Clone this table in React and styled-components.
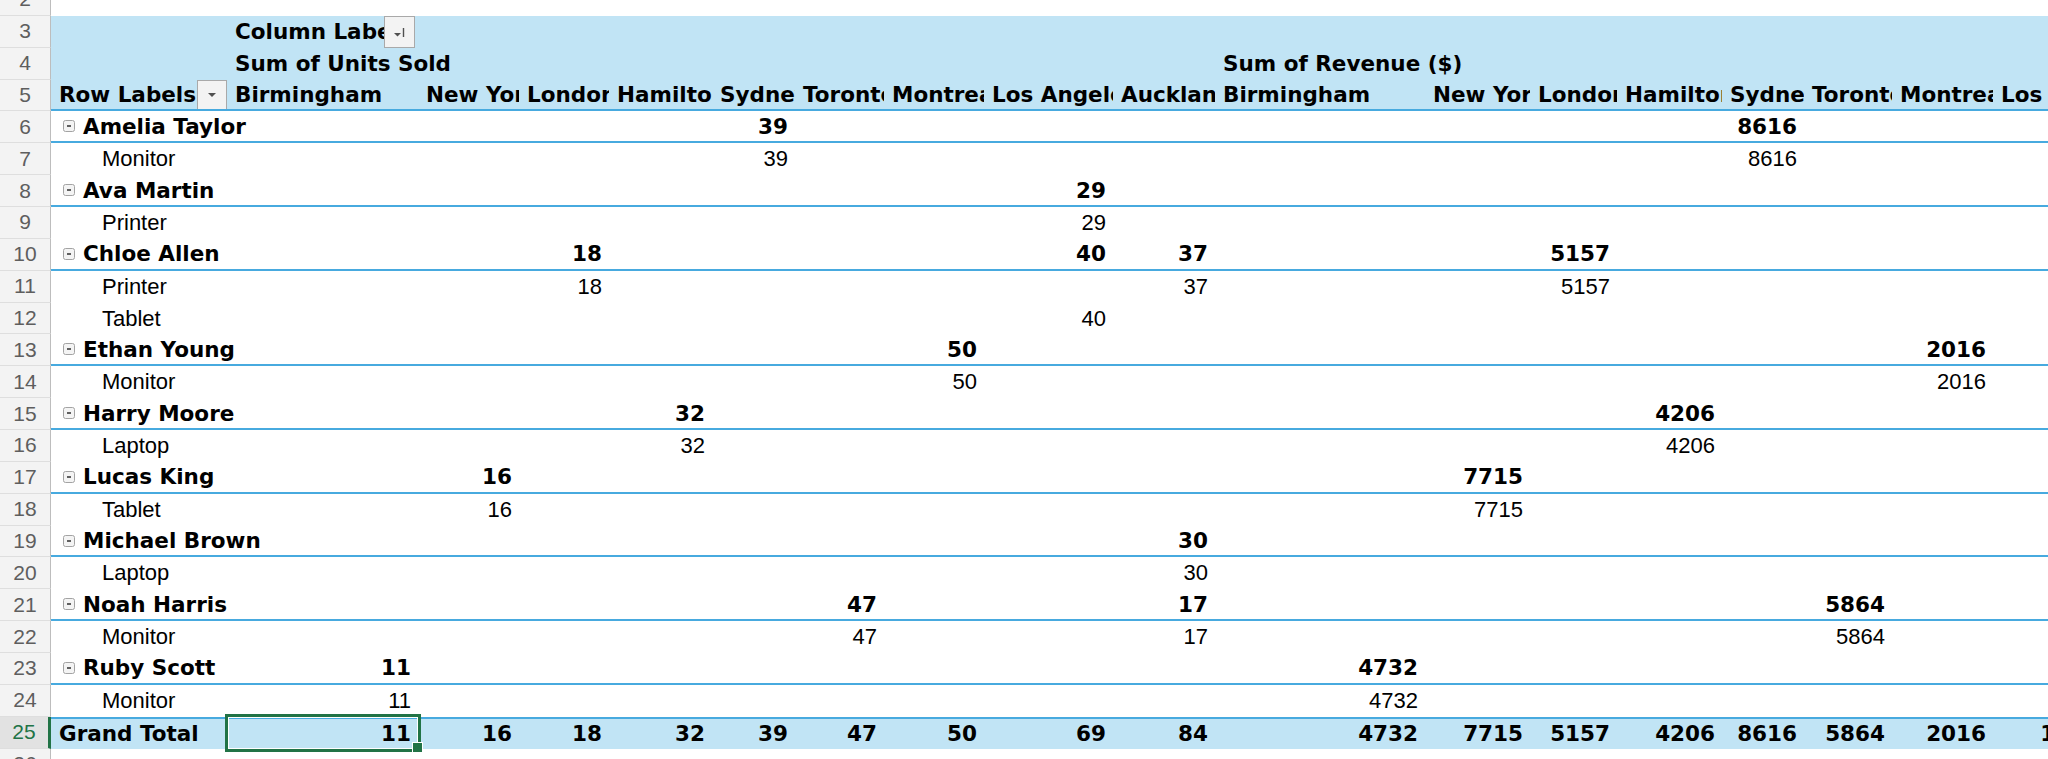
import React from 'react';
import styled, { createGlobalStyle } from 'styled-components';

// высота строки листа и ширины столбцов A..R (столбец номеров строк отдельно)
const ROW_H = 31.87;
const COL_WIDTHS = [176, 191, 101, 90, 103, 83, 89, 100, 129, 102, 210, 105, 87, 105, 82, 88, 101, 129];

const BOLD_FONT = "'DejaVu Sans', 'Liberation Sans', Arial, sans-serif";
const PLAIN_FONT = "'Liberation Sans', Arial, sans-serif";

const CITIES = ['Birmingham', 'New York', 'London', 'Hamilton', 'Sydney', 'Toronto', 'Montreal', 'Los Angeles', 'Auckland'];
const REV_CITIES = CITIES.slice(0, 8);

const people = [
  { name: 'Amelia Taylor', items: [{ name: 'Monitor', units: { Sydney: 39 }, revenue: { Sydney: 8616 } }] },
  { name: 'Ava Martin', items: [{ name: 'Printer', units: { 'Los Angeles': 29 }, revenue: { 'Los Angeles': 5423 } }] },
  {
    name: 'Chloe Allen',
    items: [
      { name: 'Printer', units: { London: 18, Auckland: 37 }, revenue: { London: 5157, Auckland: 9135 } },
      { name: 'Tablet', units: { 'Los Angeles': 40 }, revenue: { 'Los Angeles': 9880 } },
    ],
  },
  { name: 'Ethan Young', items: [{ name: 'Monitor', units: { Montreal: 50 }, revenue: { Montreal: 2016 } }] },
  { name: 'Harry Moore', items: [{ name: 'Laptop', units: { Hamilton: 32 }, revenue: { Hamilton: 4206 } }] },
  { name: 'Lucas King', items: [{ name: 'Tablet', units: { 'New York': 16 }, revenue: { 'New York': 7715 } }] },
  { name: 'Michael Brown', items: [{ name: 'Laptop', units: { Auckland: 30 }, revenue: { Auckland: 6000 } }] },
  {
    name: 'Noah Harris',
    items: [{ name: 'Monitor', units: { Toronto: 47, Auckland: 17 }, revenue: { Toronto: 5864, Auckland: 3400 } }],
  },
  { name: 'Ruby Scott', items: [{ name: 'Monitor', units: { Birmingham: 11 }, revenue: { Birmingham: 4732 } }] },
];

const addInto = (acc, obj) => {
  Object.entries(obj).forEach(([k, v]) => { acc[k] = (acc[k] || 0) + v; });
  return acc;
};

const toValues = ({ units, revenue }) => [
  ...CITIES.map(c => units[c] ?? null),
  ...REV_CITIES.map(c => revenue[c] ?? null),
];

const sumOf = list => ({
  units: list.reduce((acc, x) => addInto(acc, x.units), {}),
  revenue: list.reduce((acc, x) => addInto(acc, x.revenue), {}),
});

const GlobalStyle = createGlobalStyle`
  html, body {
    margin: 0;
    padding: 0;
    background: #fff;
    overflow: hidden;
  }
  body {
    font-family: ${PLAIN_FONT};
  }
`;

const Viewport = styled.div`
  width: 2048px;
  height: 759px;
  overflow: hidden;
  background: #fff;
`;

// лист прокручен так, что строка 2 видна наполовину
const Sheet = styled.div`
  margin-top: -16px;
  display: flex;
  flex-direction: column;
`;

const Row = styled.div`
  display: flex;
  height: ${ROW_H}px;
  flex: 0 0 ${ROW_H}px;
`;

const RowNum = styled.div`
  flex: 0 0 51px;
  box-sizing: border-box;
  display: flex;
  align-items: center;
  justify-content: center;
  background: ${p => (p.$active ? '#e2e2e2' : '#f3f3f3')};
  color: ${p => (p.$active ? '#217346' : '#5e5e5e')};
  border-right: ${p => (p.$active ? '3px solid #217346' : '1px solid #bdbdbd')};
  border-bottom: 1px solid #dedede;
  font-family: ${PLAIN_FONT};
  font-size: 21px;
`;

const Band = styled.div`
  flex: 0 0 auto;
  display: grid;
  grid-template-columns: ${COL_WIDTHS.map(w => `${w}px`).join(' ')};
  box-sizing: border-box;
  height: 100%;
  background: ${p => (p.$fill ? '#c1e4f5' : '#fff')};
  border-top: ${p => (p.$lineAbove ? '2px solid #47aadf' : 'none')};
  border-bottom: ${p => (p.$lineBelow ? '2px solid #47aadf' : 'none')};
`;

const Cell = styled.div`
  position: relative;
  min-width: 0;
  display: flex;
  align-items: center;
  justify-content: ${p => (p.$right ? 'flex-end' : 'flex-start')};
  padding: 0 ${p => p.$padRight ?? 7}px 0 ${p => p.$indent ?? 8}px;
  overflow: ${p => (p.$spill ? 'visible' : 'hidden')};
  white-space: nowrap;
  font-family: ${p => (p.$bold ? BOLD_FONT : PLAIN_FONT)};
  font-weight: ${p => (p.$bold ? 700 : 400)};
  font-size: ${p => (p.$bold ? 21.5 : 22)}px;
  color: #000;
`;

const Label = styled.span`
  flex: 1 1 auto;
  min-width: 0;
  overflow: hidden;
`;

const FilterButton = styled.span`
  flex: 0 0 ${p => p.$w}px;
  height: ${p => p.$h}px;
  align-self: flex-start;
  box-sizing: border-box;
  margin-right: ${p => p.$gap}px;
  border: 1px solid #a9a9a9;
  background: #f3f3f3;
  display: flex;
  align-items: center;
  justify-content: center;
`;

const ExpandIcon = styled.svg`
  flex: 0 0 12px;
  margin-right: 8px;
`;

const Selection = styled.span`
  position: absolute;
  top: -5px;
  bottom: -3px;
  left: -2px;
  right: -3px;
  border: 3px solid #217346;
  box-shadow: inset 0 0 0 1px #fff;
  pointer-events: none;
`;

const FillHandle = styled.span`
  position: absolute;
  right: -5px;
  bottom: -4px;
  width: 9px;
  height: 9px;
  background: #217346;
  border: 1px solid #fff;
`;

const DropArrow = () => (
  <svg width="10" height="6" viewBox="0 0 10 6">
    <polygon points="1,1 9,1 5,5" fill="#505050" />
  </svg>
);

const SortedDropArrow = () => (
  <svg width="14" height="14" viewBox="0 0 14 14">
    <polygon points="1,8 8,8 4.5,11.5" fill="#505050" />
    <line x1="10.5" y1="3" x2="10.5" y2="12" stroke="#505050" strokeWidth="1.4" />
  </svg>
);

const Collapse = () => (
  <ExpandIcon width="12" height="12" viewBox="0 0 12 12">
    <rect x="0.5" y="0.5" width="11" height="11" rx="2" fill="#f4f4f4" stroke="#a3a3a3" />
    <rect x="4" y="5" width="4" height="2" fill="#606060" />
  </ExpandIcon>
);

const emptyCells = (n, offset = 0) =>
  Array.from({ length: n }, (_, i) => <Cell key={`e${i + offset}`} />);

const DataRow = ({ num, label, kind, values, lineBelow, lineAbove, fill, active }) => {
  const bold = kind !== 'item';
  return (
    <Row>
      <RowNum $active={active}>{num}</RowNum>
      <Band $fill={fill} $lineBelow={lineBelow} $lineAbove={lineAbove}>
        <Cell $bold={bold} $spill $indent={kind === 'item' ? 51 : kind === 'group' ? 12 : 8}>
          {kind === 'group' && <Collapse />}
          {label}
        </Cell>
        {values.map((v, i) => (
          <Cell key={i} $bold={bold} $right $spill={active && i === 0}>
            {v}
            {active && i === 0 && (
              <>
                <Selection />
                <FillHandle />
              </>
            )}
          </Cell>
        ))}
      </Band>
    </Row>
  );
};

const App = () => {
  const rows = [];
  let num = 6;
  people.forEach(person => {
    rows.push(
      <DataRow
        key={num}
        num={num}
        kind="group"
        label={person.name}
        values={toValues(sumOf(person.items))}
        lineBelow
      />
    );
    num += 1;
    person.items.forEach(item => {
      rows.push(<DataRow key={num} num={num} kind="item" label={item.name} values={toValues(item)} />);
      num += 1;
    });
  });

  const allItems = people.flatMap(p => p.items);

  return (
    <Viewport>
      <GlobalStyle />
      <Sheet>
        <Row>
          <RowNum>2</RowNum>
          <Band>{emptyCells(18)}</Band>
        </Row>

        <Row>
          <RowNum>3</RowNum>
          <Band $fill>
            <Cell />
            <Cell $bold $padRight={0}>
              <Label>Column Labels</Label>
              <FilterButton $w={31} $h={32} $gap={3}>
                <SortedDropArrow />
              </FilterButton>
            </Cell>
            {emptyCells(16, 2)}
          </Band>
        </Row>

        <Row>
          <RowNum>4</RowNum>
          <Band $fill>
            <Cell />
            <Cell $bold $spill>Sum of Units Sold</Cell>
            {emptyCells(8, 2)}
            <Cell $bold $spill>Sum of Revenue ($)</Cell>
            {emptyCells(7, 11)}
          </Band>
        </Row>

        <Row>
          <RowNum>5</RowNum>
          <Band $fill $lineBelow>
            <Cell $bold $padRight={0}>
              <Label>Row Labels</Label>
              <FilterButton $w={30} $h={30} $gap={0}>
                <DropArrow />
              </FilterButton>
            </Cell>
            {[...CITIES, ...REV_CITIES].map((c, i) => (
              <Cell key={i} $bold>{c}</Cell>
            ))}
          </Band>
        </Row>

        {rows}

        <DataRow
          num={25}
          kind="total"
          label="Grand Total"
          values={toValues(sumOf(allItems))}
          fill
          lineAbove
          active
        />

        <Row>
          <RowNum>26</RowNum>
          <Band>{emptyCells(18)}</Band>
        </Row>
      </Sheet>
    </Viewport>
  );
};

export default App;
